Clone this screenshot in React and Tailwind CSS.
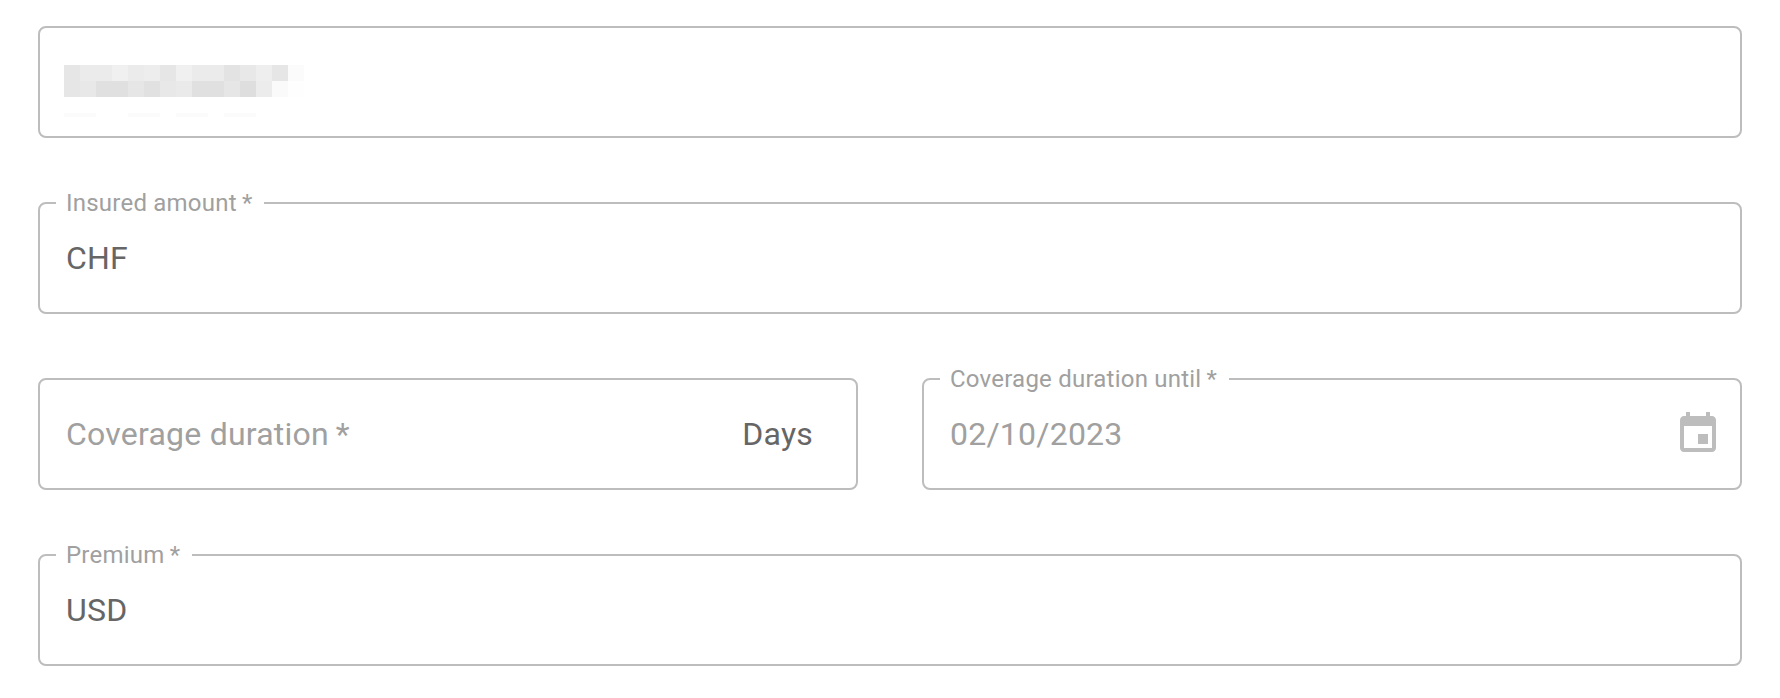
import React from 'react'

const row1 = ['bg-[#e6e6e6]', 'bg-[#ebebeb]', 'bg-[#ebebeb]', 'bg-[#f0f0f0]', 'bg-[#ebebeb]', 'bg-[#ededed]', 'bg-[#e6e6e6]', 'bg-[#f0f0f0]', 'bg-[#ebebeb]', 'bg-[#ebebeb]', 'bg-[#e3e3e3]', 'bg-[#e8e8e8]', 'bg-[#eeeeee]', 'bg-[#e6e6e6]', 'bg-[#fbfbfb]']
const row2 = ['bg-[#e6e6e6]', 'bg-[#e8e8e8]', 'bg-[#e0e0e0]', 'bg-[#e0e0e0]', 'bg-[#e6e6e6]', 'bg-[#e1e1e1]', 'bg-[#e8e8e8]', 'bg-[#eaeaea]', 'bg-[#e0e0e0]', 'bg-[#e0e0e0]', 'bg-[#e6e6e6]', 'bg-[#dedede]', 'bg-[#ececec]', 'bg-[#fafafa]', 'bg-[#fefefe]']
const row3 = ['bg-[#fbfbfb]', 'bg-[#fbfbfb]', 'bg-transparent', 'bg-transparent', 'bg-[#fbfbfb]', 'bg-[#fbfbfb]', 'bg-transparent', 'bg-[#fbfbfb]', 'bg-[#fbfbfb]', 'bg-transparent', 'bg-[#fbfbfb]', 'bg-[#fbfbfb]']

function Cells ({ colors, height }) {
  return (
    <div className="flex">
      {colors.map((color, i) => (
        <div key={i} className={`w-[16px] ${height} ${color}`}></div>
      ))}
    </div>
  )
}

function Field ({ label, children }) {
  return (
    <div className="relative flex items-center w-full h-[112px] pl-[26px] pr-[18px] border-2 border-[#bdbdbd] rounded-lg">
      {label && (
        <span className="absolute left-[16px] top-[-17px] pl-[10px] pr-[12px] bg-white text-[24px] leading-[32px] text-[#a0a0a0]">{label}</span>
      )}
      {children}
    </div>
  )
}

function App () {
  return (
    <div className="flex flex-col gap-[64px] w-[1780px] h-[698px] overflow-hidden bg-white pl-[38px] pr-[38px] pt-[26px] font-['Roboto',sans-serif] tracking-[0.014em]">
      <Field>
        {/* pixelated name */}
        <div className="flex flex-col ml-[-2px] mt-[18px]">
          <Cells colors={row1} height="h-[16px]" />
          <Cells colors={row2} height="h-[16px]" />
          <div className="mt-[16px]">
            <Cells colors={row3} height="h-[4px]" />
          </div>
        </div>
      </Field>

      <Field label="Insured amount&#8201;*">
        <span className="text-[32px] text-[#666666]">CHF</span>
      </Field>

      <div className="grid grid-cols-2 gap-[64px]">
        <Field>
          <span className="flex-1 text-[32px] text-[#a0a0a0]">Coverage duration&#8201;*</span>
          <span className="mr-[25px] text-[32px] text-[#666666]">Days</span>
        </Field>
        <Field label="Coverage duration until&#8201;*">
          <span className="flex-1 text-[32px] text-[#a0a0a0]">02/10/2023</span>
          <svg className="w-[48px] h-[48px]" viewBox="0 0 24 24" fill="#bdbdbd">
            <path d="M17 12h-5v5h5v-5zM16 1v2H8V1H6v2H5c-1.11 0-1.99.9-1.99 2L3 19c0 1.1.89 2 2 2h14c1.1 0 2-.9 2-2V5c0-1.1-.9-2-2-2h-1V1h-2zm3 18H5V8h14v11z" />
          </svg>
        </Field>
      </div>

      <Field label="Premium&#8201;*">
        <span className="text-[32px] text-[#666666]">USD</span>
      </Field>
    </div>
  )
}

export default App
